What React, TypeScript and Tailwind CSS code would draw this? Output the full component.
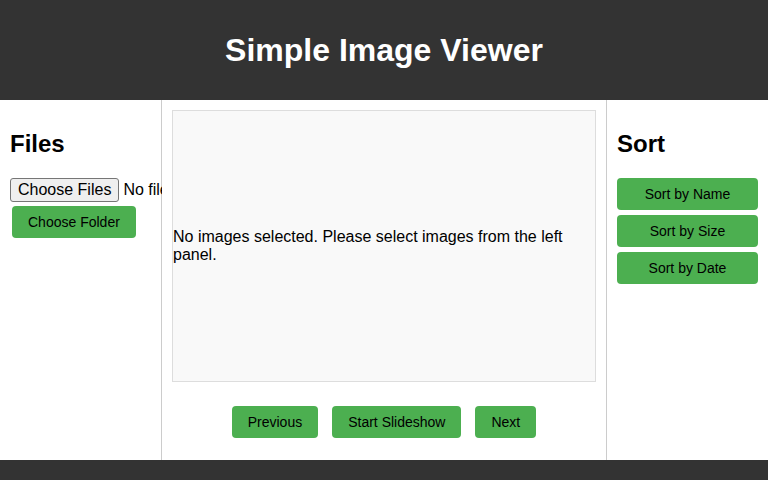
import React from 'react';

const btn =
  'bg-[#4caf50] text-black text-sm leading-4 px-4 h-8 rounded-[4px] cursor-pointer hover:bg-[#45a049]';

export default function App() {
  return (
    <div className="min-h-screen bg-white font-['Liberation_Sans',Arial,sans-serif] text-black">
      <header className="h-[100px] bg-[#333] flex items-center justify-center">
        <h1 className="text-[32px] font-bold text-white">Simple Image Viewer</h1>
      </header>

      <main className="flex h-[360px]">
        {/* left: files */}
        <aside className="w-[162px] shrink-0 border-r border-[#ccc] p-[10px]">
          <h2 className="mt-5 mb-5 text-2xl leading-7 font-bold">Files</h2>
          <div className="w-[152px] overflow-hidden">
            <input
              type="file"
              multiple
              className="block w-[260px] text-base leading-[22px] whitespace-nowrap file:mr-1 file:border file:border-[#767676] file:bg-[#efefef] file:rounded-[3px] file:px-[7px] file:py-0 file:text-black"
            />
          </div>
          <button className={btn + ' mt-[4px] ml-[2px]'}>Choose Folder</button>
        </aside>

        {/* center: viewer */}
        <section className="flex-1 p-[10px] flex flex-col">
          <div className="h-[272px] bg-[#f9f9f9] border border-[#ddd] flex items-center">
            <p className="text-base leading-[18px] pr-8">
              No images selected. Please select images from the left panel.
            </p>
          </div>
          <div className="mt-6 flex justify-center gap-[14px]">
            <button className={btn}>Previous</button>
            <button className={btn}>Start Slideshow</button>
            <button className={btn}>Next</button>
          </div>
        </section>

        {/* right: sort */}
        <aside className="w-[162px] shrink-0 border-l border-[#ccc] p-[10px]">
          <h2 className="mt-5 mb-5 text-2xl leading-7 font-bold">Sort</h2>
          <div className="flex flex-col gap-[5px]">
            <button className={btn + ' w-full'}>Sort by Name</button>
            <button className={btn + ' w-full'}>Sort by Size</button>
            <button className={btn + ' w-full'}>Sort by Date</button>
          </div>
        </aside>
      </main>

      <footer className="h-10 bg-[#333]" />
    </div>
  );
}
